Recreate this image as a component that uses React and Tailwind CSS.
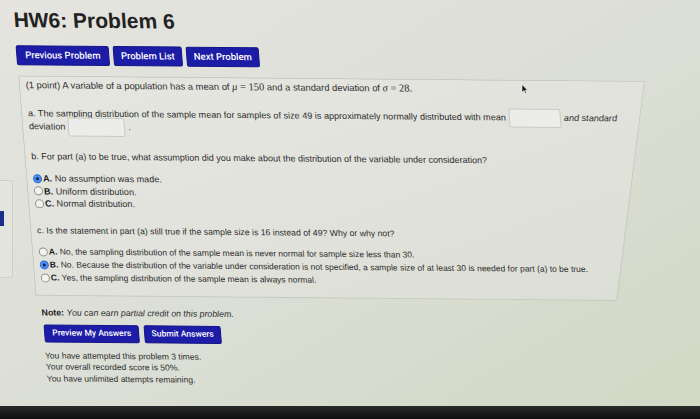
import React from "react"

const Radio = ({ checked }) =>
  checked ? (
    <span className="inline-flex h-[9px] w-[9px] shrink-0 items-center justify-center rounded-full border border-[#2f6fd0] bg-[#4a8ef0]">
      <span className="h-[3px] w-[3px] rounded-full bg-[#0f1d52]" />
    </span>
  ) : (
    <span className="h-[9px] w-[9px] shrink-0 rounded-full border border-[#8f918c] bg-[#f3f3f0]" />
  )

const Option = ({ checked, label, children }) => (
  <div className="flex items-center gap-[1px]">
    <Radio checked={checked} />
    <span>
      <b className="text-[#1c1c1c]">{label}</b> {children}
    </span>
  </div>
)

const Blank = ({ w }) => (
  <span className={`mx-[3px] -my-[4px] inline-block h-[19px] ${w} rounded-[2px] border border-[#c9cac5] bg-[#ecedea] align-middle`} />
)

const NavButton = ({ w, children }) => (
  <button className={`flex h-[20px] ${w} items-center justify-center rounded-[2px] border border-[#14148a] bg-[#1c1ca6] font-['Roboto'] text-[9.5px] font-medium text-white`}>
    {children}
  </button>
)

const Math = ({ children }) => (
  <span className="font-['Liberation_Serif'] text-[10.5px]">{children}</span>
)

export default function App() {
  return (
    <div className="flex h-[419px] w-[700px] flex-col overflow-hidden bg-linear-to-br from-[#e5e4df] via-[#dcdfd6] to-[#d0d8c4] font-['Liberation_Sans',sans-serif] text-[#2e2e2e]">
      <div className="relative flex-1 overflow-hidden">
        {/* sliver of a side panel and its blue tab */}
        <div className="absolute left-0 top-[180px] h-[98px] w-[13px] rounded-r-[3px] border border-l-0 border-[#cdd0c6] bg-white/10" />
        <div className="absolute left-0 top-[211px] h-[15px] w-[4px] bg-[#1d2d8e]" />

        <div className="origin-top-left skew-x-[5deg] rotate-[0.5deg] px-[12px] pt-[8px]">
          <h1 className="text-[21px] font-bold leading-[24px] text-[#222]">HW6: Problem 6</h1>

          <div className="mt-[13px] flex gap-[4px]">
            <NavButton w="w-[93px]">Previous Problem</NavButton>
            <NavButton w="w-[69px]">Problem List</NavButton>
            <NavButton w="w-[73px]">Next Problem</NavButton>
          </div>

          {/* problem box, drawn narrower at the bottom as in the photo */}
          <div className="relative mt-[10px] w-[627px] pb-[12px] pl-[7px] pr-[6px] pt-[4px]">
            <div className="absolute inset-0 bg-[#c8cbc1] [clip-path:polygon(0_0,100%_0,calc(100%-45px)_100%,0_100%)]" />
            <div className="absolute inset-[1px] bg-linear-to-br from-[#e6e6e1] to-[#dcdfd6] [clip-path:polygon(0_0,100%_0,calc(100%-45px)_100%,0_100%)]" />

            <div className="relative">
              <p className="text-[9.4px] leading-[12px]">
                (1 point) A variable of a population has a mean of <Math><i>μ</i> = 150</Math> and a standard deviation of <Math><i>σ</i> = 28.</Math>
              </p>

              <p className="mt-[16px] text-[9.1px] leading-[13px]">
                a. The sampling distribution of the sample mean for samples of size 49 is approximately normally distributed with mean
                <Blank w="w-[52px]" />
                <i>and standard</i>
                <br />
                deviation
                <Blank w="w-[57px]" />.
              </p>

              <p className="mt-[17px] text-[9px] leading-[12px]">
                b. For part (a) to be true, what assumption did you make about the distribution of the variable under consideration?
              </p>
              <div className="mt-[10px] text-[9.1px] leading-[12.5px]">
                <Option checked label="A.">No assumption was made.</Option>
                <Option label="B.">Uniform distribution.</Option>
                <Option label="C.">Normal distribution.</Option>
              </div>

              <p className="mt-[14.5px] text-[8.7px] leading-[12px]">
                c. Is the statement in part (a) still true if the sample size is 16 instead of 49? Why or why not?
              </p>
              <div className="mt-[8.5px] text-[8.5px] leading-[13px]">
                <Option label="A.">No, the sampling distribution of the sample mean is never normal for sample size less than 30.</Option>
                <Option checked label="B.">No. Because the distribution of the variable under consideration is not specified, a sample size of at least 30 is needed for part (a) to be true.</Option>
                <Option label="C.">Yes, the sampling distribution of the sample mean is always normal.</Option>
              </div>
            </div>
          </div>

          <div className="pl-[5px] text-[8.5px]">
            <p className="mt-[10px] text-[8.8px] leading-[12px]">
              <b className="text-[#1c1c1c]">Note:</b> <i>You can earn partial credit on this problem.</i>
            </p>
            <div className="mt-[6px] flex gap-[5px] pl-[1px]">
              <button className="h-[18px] w-[95px] rounded-[2px] border border-[#14148a] bg-[#1c1ca6] font-['Roboto'] text-[8.5px] font-medium text-white">
                Preview My Answers
              </button>
              <button className="h-[18px] w-[77px] rounded-[2px] border border-[#14148a] bg-[#1c1ca6] font-['Roboto'] text-[8.5px] font-medium text-white">
                Submit Answers
              </button>
            </div>
            <div className="mt-[8px] leading-[11.5px]">
              <p>You have attempted this problem 3 times.</p>
              <p>Your overall recorded score is 50%.</p>
              <p>You have unlimited attempts remaining.</p>
            </div>
          </div>
        </div>

        {/* mouse pointer */}
        <svg className="absolute left-[521px] top-[84px]" width="7" height="10" viewBox="0 0 7 10">
          <path d="M1 0.5 L1 8.5 L3 6.6 L4.4 9.5 L5.5 9 L4.2 6.2 L6.6 6.2 Z" fill="#111" stroke="#fff" strokeWidth="0.6" />
        </svg>
      </div>
      <div className="h-[13px] bg-linear-to-b from-[#2a2a2a] to-[#0e0e0e]" />
    </div>
  )
}
